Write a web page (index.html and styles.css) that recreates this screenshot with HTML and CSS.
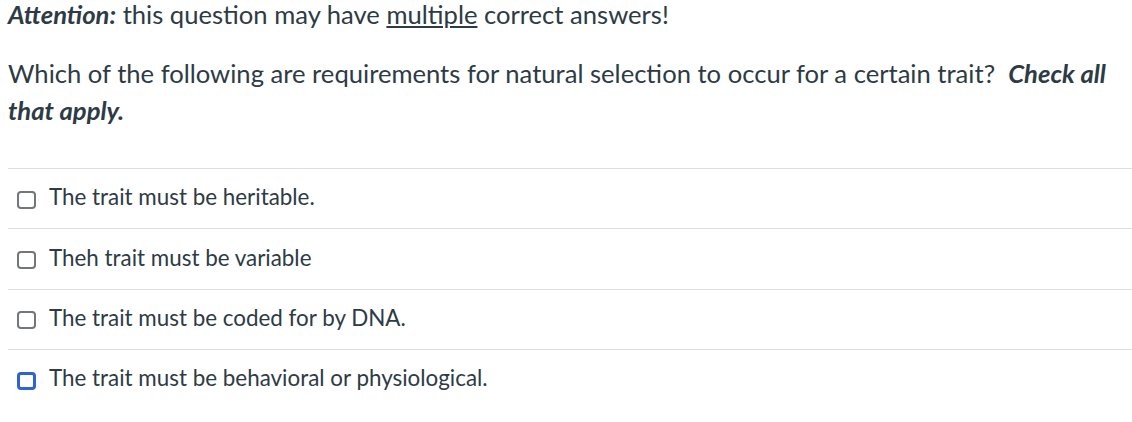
FILE: index.html
```html
<!DOCTYPE html>
<html>
<head>
<meta charset="utf-8">
<link rel="stylesheet" href="styles.css">
</head>
<body>
<div class="quiz">
  <p class="attention"><strong><em>Attention:</em></strong> this question may have <u>multiple</u> correct answers!</p>
  <p class="question">Which of the following are requirements for natural selection to occur for a certain trait?&nbsp; <strong><em>Check all</em></strong> <strong><em>that apply.</em></strong></p>
  <div class="answers">
    <label class="answer"><span class="box"></span><span class="text">The trait must be heritable.</span></label>
    <label class="answer"><span class="box"></span><span class="text">Theh trait must be variable</span></label>
    <label class="answer"><span class="box"></span><span class="text">The trait must be coded for by DNA.</span></label>
    <label class="answer"><span class="box focus"></span><span class="text">The trait must be behavioral or physiological.</span></label>
  </div>
</div>
</body>
</html>
```
FILE: styles.css
```css
html, body {
  margin: 0;
  padding: 0;
  background: #fff;
}
body {
  font-family: Lato, "Open Sans", sans-serif;
  color: #2d3b45;
  overflow: hidden;
}
.quiz {
  padding-left: 8px;
}
.attention {
  margin: 0;
  font-size: 25.6px;
  line-height: 28px;
}
.question {
  margin: 26.5px 0 0 0;
  font-size: 25.6px;
  line-height: 37px;
  padding-right: 20px;
}
.answers {
  margin-top: 39.5px;
}
.answer {
  display: flex;
  align-items: center;
  height: 60.4px;
  border-top: 1px solid #dcdfe2;
  padding-left: 9px;
  box-sizing: border-box;
}
.box {
  width: 19px;
  height: 18px;
  box-sizing: border-box;
  border: 2px solid #73777b;
  border-radius: 4px;
  flex: none;
  margin-right: 13px;
  margin-top: 2px;
}
.box.focus {
  border: 3px solid #2d63d3;
}
.text {
  font-size: 22.4px;
  line-height: 28px;
  margin-bottom: 3px;
}
```
